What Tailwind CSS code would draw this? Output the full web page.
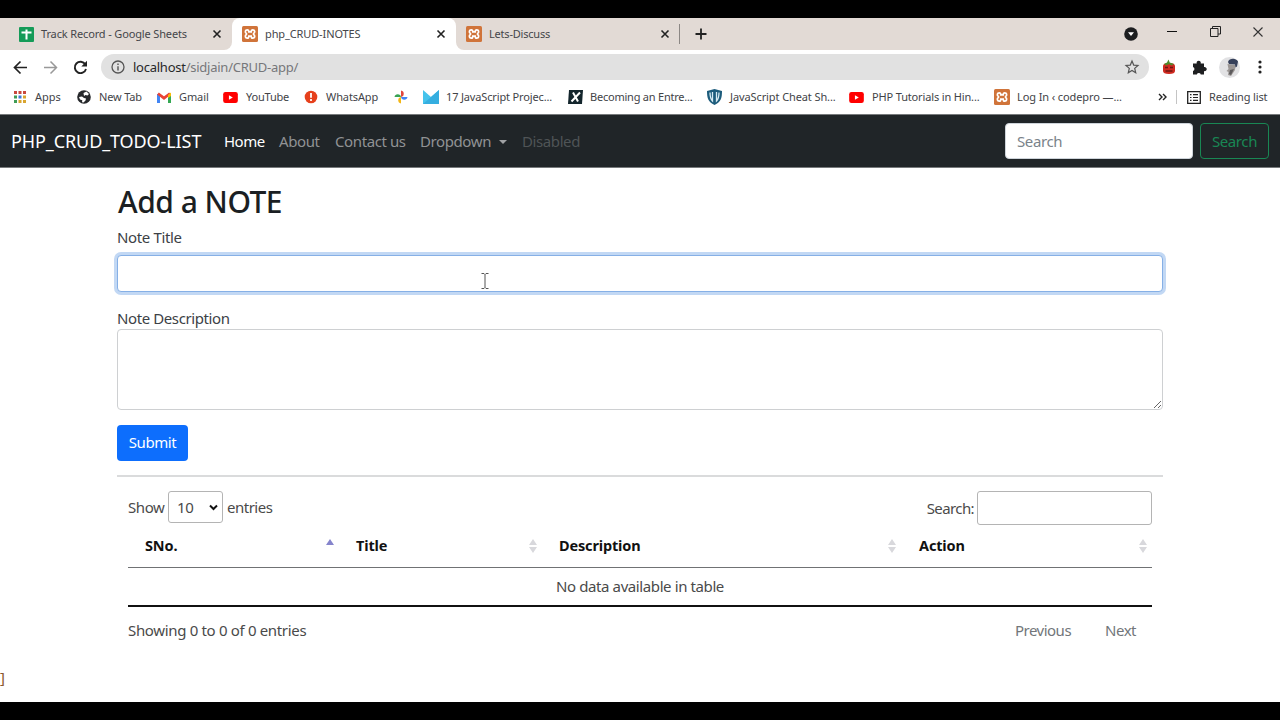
<!DOCTYPE html>
<html lang="en">

<head>
    <meta charset="UTF-8">
    <meta name="viewport" content="width=device-width, initial-scale=1.0">
    <title>php_CRUD-INOTES</title>
    <script src="https://cdn.jsdelivr.net/npm/@tailwindcss/browser@4"></script>
</head>

<body class="bg-black font-['Noto_Sans','Open_Sans',sans-serif] overflow-hidden">

    <!-- Shared icon shapes -->
    <svg class="hidden">
        <symbol id="xampp" viewBox="0 0 16 16">
            <rect width="16" height="16" rx="1.5" fill="#d0743a" />
            <path d="M5.2 3.8c-2 0-2.6 2.6-.8 3.6v1.2c-1.8 1-1.2 3.6.8 3.6 1.400 0 1.600-1.300 1.600-2h2.400c0 .7.2 2 1.600 2 2 0 2.600-2.600.8-3.600V7.400c1.800-1 1.200-3.600-.8-3.600-1.400 0-1.600 1.300-1.600 2H6.800c0-.7-.2-2-1.600-2z" fill="none" stroke="#fff" stroke-width="1.7" />
        </symbol>
        <symbol id="youtube" viewBox="0 0 16 12">
            <rect width="16" height="12" rx="2.5" fill="#f00" />
            <path d="M6.300 3.500v5L10.500 6z" fill="#fff" />
        </symbol>
        <symbol id="close" viewBox="0 0 10 10">
            <path d="M1.500 1.500l7 7M8.500 1.500l-7 7" stroke="#222" stroke-width="1.600" />
        </symbol>
        <symbol id="sort" viewBox="0 0 8 14">
            <path d="M4 0l4 6H0zM0 8h8l-4 6z" fill="#d8d8dc" />
        </symbol>
    </svg>

    <div class="h-[720px] w-[1280px] pt-[18px] pb-[18px]">
        <div class="h-full bg-white overflow-hidden">

            <!-- Tab strip -->
            <div class="flex h-8 bg-white text-[11px] text-[#45464a]">
                <div class="flex items-center w-[232px] bg-[#e2dad5] rounded-br-lg pl-[19px] pr-[10px]">
                    <svg class="size-[15px]" viewBox="0 0 15 15">
                        <rect width="15" height="15" rx="1" fill="#159b58" />
                        <path d="M2.500 5.500h10M7.500 2.500v10" stroke="#fff" stroke-width="2" />
                    </svg>
                    <span class="ml-[7px] whitespace-nowrap tracking-[-0.14px]">Track Record - Google Sheets</span>
                    <svg class="ml-auto size-[10px]"><use href="#close" /></svg>
                </div>
                <div class="bg-[#e2dad5] w-[224px]">
                    <div class="flex items-center h-full bg-white rounded-t-lg pl-[10px] pr-[10px]">
                        <svg class="size-4"><use href="#xampp" /></svg>
                        <span class="ml-[7px] whitespace-nowrap tracking-[-0.12px]">php_CRUD-INOTES</span>
                        <svg class="ml-auto size-[10px]"><use href="#close" /></svg>
                    </div>
                </div>
                <div class="flex items-center grow bg-[#e2dad5] rounded-bl-lg pl-[10px]">
                    <svg class="size-4"><use href="#xampp" /></svg>
                    <span class="ml-[7px] w-[171px] whitespace-nowrap tracking-[-0.2px]">Lets-Discuss</span>
                    <svg class="size-[10px]"><use href="#close" /></svg>
                    <div class="ml-[9px] h-5 w-px bg-[#8c8784]"></div>
                    <svg class="ml-[15px] size-3" viewBox="0 0 12 12"><path d="M6 .5v11M.5 6h11" stroke="#222" stroke-width="1.800" /></svg>
                    <svg class="ml-[417px] size-[14px]" viewBox="0 0 14 14">
                        <circle cx="7" cy="7" r="6.800" fill="#1d1e20" />
                        <path d="M4 5.200h6L7 9z" fill="#fff" />
                    </svg>
                    <svg class="ml-[29px] mb-1 w-[10px] h-[10px]" viewBox="0 0 10 10"><path d="M0 4.500h10" stroke="#111" /></svg>
                    <svg class="ml-[33px] mb-[5px] size-[11px]" viewBox="0 0 11 11"><path d="M.5 2.500h7.500v8H.5zM2.500 2.500V.5h8v7.500H8" fill="none" stroke="#222" /></svg>
                    <svg class="ml-[32px] mb-[5px] size-[10px]" viewBox="0 0 10 10"><path d="M.5.5l9 9M9.500.5l-9 9" stroke="#333" stroke-width="1.100" /></svg>
                </div>
            </div>

            <!-- Address bar -->
            <div class="flex items-center h-[34px] pl-[13px]">
                <svg class="size-[15px]" viewBox="0 0 15 15"><path d="M14 7.500H2M7.500 1.500l-6 6 6 6" fill="none" stroke="#222" stroke-width="1.700" /></svg>
                <svg class="ml-[15px] size-[15px]" viewBox="0 0 15 15"><path d="M1 7.500h12M7.500 1.500l6 6-6 6" fill="none" stroke="#999" stroke-width="1.500" /></svg>
                <svg class="ml-[15px] size-[15px]" viewBox="0 0 15 15">
                    <path d="M12.300 4.300A5.700 5.700 0 1 0 13 9" fill="none" stroke="#222" stroke-width="1.900" />
                    <path d="M14 .8v5.700H8.300z" fill="#222" />
                </svg>
                <div class="flex items-center ml-[13px] h-[26px] w-[1048px] rounded-full bg-[#e1e1e1] pl-[10px] pr-[9px]">
                    <svg class="size-[14px]" viewBox="0 0 14 14">
                        <circle cx="7" cy="7" r="6" fill="none" stroke="#555" stroke-width="1.300" />
                        <path d="M7 6.200v4.300M7 3.500v1.500" stroke="#555" stroke-width="1.400" />
                    </svg>
                    <span class="ml-2 pt-px text-[13px] text-[#76777a] tracking-[-0.25px]"><span class="text-[#27282a]">localhost</span>/sidjain/CRUD-app/</span>
                    <svg class="ml-auto size-4" viewBox="0 0 16 16"><path d="M8 2l1.700 4.100 4.300.4-3.300 2.900 1 4.300L8 11.400l-3.700 2.300 1-4.300L2 6.500l4.300-.4z" fill="none" stroke="#555" stroke-width="1.200" /></svg>
                </div>
                <svg class="ml-[13px] w-[14px] h-4" viewBox="0 0 14 16">
                    <path d="M1 7c0-2 2-3 6-3s6 1 6 3v5c0 2-2 3-6 3s-6-1-6-3z" fill="#cf2a20" />
                    <path d="M2 5l3-1.500L6.500.5l1.200 3L12 5 9.500 6.500 7 5 4.500 6.500z" fill="#4d8a2c" />
                    <path d="M3 8.500h3M8 8.500h3M3.500 12h7" stroke="#6e1712" stroke-width="1.300" />
                </svg>
                <svg class="ml-4 size-[15px]" viewBox="0 0 15 15"><path d="M1 3.500h3.700a2.100 2.100 0 1 1 4 0H12v3.600a2.100 2.100 0 1 1 0 4V14.500H8.800a2.100 2.100 0 0 0-4 0H1v-3.500a2.100 2.100 0 0 0 0-4z" fill="#1e1f21" /></svg>
                <svg class="ml-3 size-[21px]" viewBox="0 0 21 21">
                    <circle cx="10.500" cy="10.500" r="10.500" fill="#e2e2e4" />
                    <path d="M8.500 7l8 1-.5 5-4 6-3-1 .5-3-2-1 2-2z" fill="#9b9694" />
                    <path d="M9 5c1-4 8-4.500 10-.5l-1 5-1.500 1-.5-3-6-.5z" fill="#36405a" />
                    <path d="M11 13l4-1-3 6-2-1z" fill="#5c5a5c" />
                </svg>
                <svg class="ml-[18px] w-1 h-[14px]" viewBox="0 0 4 14">
                    <circle cx="2" cy="2" r="1.600" fill="#222" /><circle cx="2" cy="7" r="1.600" fill="#222" /><circle cx="2" cy="12" r="1.600" fill="#222" />
                </svg>
            </div>

            <!-- Bookmarks bar -->
            <div class="flex items-center h-[30px] pb-1 pl-[13px] text-[11px] text-[#424347] whitespace-nowrap">
                <div class="flex items-center gap-2 w-16">
                    <svg class="size-[14px] shrink-0" viewBox="0 0 14 14">
                        <path d="M1 1h3v3H1zM5.500 1h3v3h-3zM10 1h3v3h-3z" fill="#c9483d" />
                        <path d="M1 5.500h3v3H1z" fill="#3f9c56" /><path d="M5.500 5.500h3v3h-3z" fill="#3e79d6" /><path d="M10 5.500h3v3h-3z" fill="#d9a52f" />
                        <path d="M1 10h3v3H1z" fill="#3f9c56" /><path d="M5.500 10h3v3h-3zM10 10h3v3h-3z" fill="#d9a52f" />
                    </svg>
                    <span>Apps</span>
                </div>
                <div class="flex items-center gap-2 w-20">
                    <svg class="size-[14px] shrink-0" viewBox="0 0 14 14">
                        <circle cx="7" cy="7" r="6.800" fill="#26282b" />
                        <path d="M6.500 3l3-1.500 2.500 2.500-1.500 1.500-2-.5-1.500 1zM2 7l3-.5 2 1.500 2 .5-.5 2-2 2-1.500-.3.300-2L3 9.500z" fill="#fff" />
                    </svg>
                    <span class="tracking-[-0.15px]">New Tab</span>
                </div>
                <div class="flex items-center gap-2 w-[66px]">
                    <svg class="w-[14px] h-[11px] shrink-0" viewBox="0 0 14 11">
                        <path d="M1.500 11V2" stroke="#4285f4" stroke-width="3" /><path d="M12.500 11V2" stroke="#34a853" stroke-width="3" />
                        <path d="M1 1.500l6 4.700 6-4.700" fill="none" stroke="#ea4335" stroke-width="2.800" />
                        <path d="M11 3l3-2.500V4l-3 2z" fill="#fbbc04" />
                    </svg>
                    <span class="tracking-[-0.1px]">Gmail</span>
                </div>
                <div class="flex items-center gap-2 w-[81px]">
                    <svg class="w-[15px] h-[11px] shrink-0"><use href="#youtube" /></svg>
                    <span class="tracking-[-0.2px]">YouTube</span>
                </div>
                <div class="flex items-center gap-2 w-[90px]">
                    <svg class="size-[14px] shrink-0" viewBox="0 0 14 14">
                        <circle cx="7" cy="7" r="6.300" fill="#e6401c" />
                        <path d="M7 3v4.800M7 9v2" stroke="#fff" stroke-width="1.800" />
                    </svg>
                    <span class="tracking-[-0.1px]">WhatsApp</span>
                </div>
                <div class="w-[29px]">
                    <svg class="size-[14px]" viewBox="0 0 14 14">
                        <path d="M7 7H.5a3.300 3.300 0 0 1 6.500 0z" fill="#37a354" />
                        <path d="M7 7V.5a3.300 3.300 0 0 1 0 6.500z" fill="#e2453a" />
                        <path d="M7 7h6.500a3.300 3.300 0 0 1-6.500 0z" fill="#4285f4" />
                        <path d="M7 7v6.500a3.300 3.300 0 0 1 0-6.500z" fill="#f3b615" />
                    </svg>
                </div>
                <div class="flex items-center gap-[7px] w-[145px]">
                    <svg class="size-4 shrink-0" viewBox="0 0 16 16"><path d="M0 1l8 7 8-7v14H0z" fill="#45c3ec" /><path d="M0 15L16 1v14z" fill="#35aee0" /></svg>
                    <span class="tracking-[-0.15px]">17 JavaScript Projec...</span>
                </div>
                <div class="flex items-center gap-[7px] w-[139px]">
                    <svg class="w-[15px] h-[14px] shrink-0" viewBox="0 0 15 14"><path d="M1 0h14l-1 14H0z" fill="#13252c" /><path d="M5 2.500l5 9M12 2.500l-8.500 9" stroke="#fff" stroke-width="2" /></svg>
                    <span class="tracking-[-0.22px]">Becoming an Entre...</span>
                </div>
                <div class="flex items-center gap-2 w-[142px]">
                    <svg class="w-[15px] h-4 shrink-0" viewBox="0 0 15 16">
                        <path d="M7.500 0L15 2c0 7-1 11-7.500 14C1 13 0 9 0 2z" fill="#1d5c7c" />
                        <path d="M3 3.500c0 4 .5 6.500 2.500 8.500V3M9.500 3v9c2-2 2.500-4.500 2.500-8.500" fill="none" stroke="#d7ebf3" stroke-width="1.300" />
                    </svg>
                    <span class="tracking-[-0.1px]">JavaScript Cheat Sh...</span>
                </div>
                <div class="flex items-center gap-2 w-[145px]">
                    <svg class="w-[15px] h-[11px] shrink-0"><use href="#youtube" /></svg>
                    <span class="tracking-[-0.15px]">PHP Tutorials in Hin...</span>
                </div>
                <div class="flex items-center gap-[7px] w-[164px]">
                    <svg class="size-4 shrink-0"><use href="#xampp" /></svg>
                    <span class="tracking-[-0.1px]">Log In ‹ codepro —...</span>
                </div>
                <svg class="w-[9px] h-2" viewBox="0 0 9 8"><path d="M1 1l3 3-3 3M5 1l3 3-3 3" fill="none" stroke="#222" stroke-width="1.400" /></svg>
                <div class="ml-[9px] h-[14px] w-px bg-[#c4c4c4]"></div>
                <svg class="ml-[10px] w-[14px] h-[13px]" viewBox="0 0 14 13">
                    <path d="M.7.700h12.600v11.600H.7z" fill="none" stroke="#222" stroke-width="1.300" />
                    <path d="M3 3.700h1.500M3 6.500h1.500M3 9.300h1.500M6 3.700h5M6 6.500h5M6 9.300h5" stroke="#222" stroke-width="1.200" />
                </svg>
                <span class="ml-2 tracking-[-0.15px]">Reading list</span>
            </div>

            <!-- Navbar -->
            <nav class="flex items-center h-[54px] bg-[#202528] border-y border-[#777a7c] px-[11px] text-[15px] text-[#909294] whitespace-nowrap">
                <a class="pt-px w-[213px] text-[18px] text-white tracking-[-0.1px]">PHP_CRUD_TODO-LIST</a>
                <a class="pt-px w-[55px] text-white tracking-[-0.5px]">Home</a>
                <a class="pt-px w-14 tracking-[-0.4px]">About</a>
                <a class="pt-px w-[85px] tracking-[-0.4px]">Contact us</a>
                <a class="pt-px flex items-center w-[102px] tracking-[-0.4px]">Dropdown
                    <svg class="ml-2 w-2 h-1" viewBox="0 0 8 4"><path d="M0 0h8L4 4z" fill="#a0a2a4" /></svg>
                </a>
                <a class="pt-px text-[#4f5456] tracking-[-0.4px]">Disabled</a>
                <input type="text" placeholder="Search" class="ml-auto h-9 w-[188px] rounded bg-white border border-[#ced4da] px-[11px] tracking-[-0.4px] placeholder:text-[#7a838a]">
                <button class="ml-[7px] h-9 w-[69px] rounded border border-[#198754] text-[#198754] tracking-[-0.4px]">Search</button>
            </nav>

            <!-- Note form -->
            <div class="mx-auto w-[1046px] text-[15px] text-[#3c4146]">
                <h2 class="pt-[16px] pl-px h-[58px] text-[30px] leading-9 font-medium text-[#1b1f23] tracking-[-0.5px]">Add a NOTE</h2>
                <label class="block h-[29px] leading-[22px] tracking-[-0.35px]">Note Title</label>
                <input type="text" class="block h-[37px] w-full rounded border border-[#86b0e6] bg-white ring-3 ring-[#c2d8f4]">
                <label class="block mt-[15px] h-[22px] leading-[22px] tracking-[-0.4px]">Note Description</label>
                <textarea class="block h-[81px] w-full rounded border border-[#ced0d2] bg-white resize-y"></textarea>
                <button class="block mt-[15px] h-9 w-[71px] rounded bg-[#0d6efd] pb-px text-white tracking-[-0.4px]">Submit</button>
                <hr class="mt-[14px] border-t-2 border-[#dadbdc]">

                <!-- Notes table -->
                <div class="px-[11px] text-[#4a4a4a]">
                    <div class="flex justify-between mt-[14px] h-[34px]">
                        <label class="flex items-center h-8 tracking-[-0.4px]">
                            <span class="w-10">Show</span>
                            <span class="flex items-center justify-between h-8 w-[55px] rounded-[3px] border border-[#b4b4b4] pl-2 pr-1">10
                                <svg class="w-[9px] h-[7px]" viewBox="0 0 9 7"><path d="M1 1.500l3.500 3.500L8 1.500" fill="none" stroke="#111" stroke-width="2" /></svg>
                            </span>
                            <span class="ml-1 tracking-[-0.5px]">entries</span>
                        </label>
                        <label class="flex items-center tracking-[-0.6px]">Search:
                            <input type="text" class="ml-[3px] h-[34px] w-[175px] rounded-[3px] border border-[#b4b4b4] bg-white">
                        </label>
                    </div>
                    <table class="w-full table-fixed text-left">
                        <thead>
                            <tr class="h-[42px] border-b border-[#707274] text-[14.500px] text-[#111] tracking-[-0.15px]">
                                <th class="w-[211px] pl-[17px] pr-[5px] font-bold"><div class="flex items-center justify-between">SNo.<svg class="w-2 h-[14px]" viewBox="0 0 8 14"><path d="M4 0l4 6H0z" fill="#8584cc" /></svg></div></th>
                                <th class="w-[203px] pl-[17px] pr-[5px] font-bold"><div class="flex items-center justify-between">Title<svg class="w-2 h-[14px]"><use href="#sort" /></svg></div></th>
                                <th class="w-[359px] pl-[17px] pr-[5px] font-bold"><div class="flex items-center justify-between">Description<svg class="w-2 h-[14px]"><use href="#sort" /></svg></div></th>
                                <th class="pl-[18px] pr-[5px] font-bold"><div class="flex items-center justify-between">Action<svg class="w-2 h-[14px]"><use href="#sort" /></svg></div></th>
                            </tr>
                        </thead>
                        <tbody>
                            <tr class="h-[39px] border-b-2 border-[#111]">
                                <td colspan="4" class="text-center tracking-[-0.4px]">No data available in table</td>
                            </tr>
                        </tbody>
                    </table>
                    <div class="flex justify-between mt-[12px] leading-[22px]">
                        <span class="tracking-[-0.33px]">Showing 0 to 0 of 0 entries</span>
                        <div class="flex gap-[34px] pr-4 text-[#72767a] tracking-[-0.5px]">
                            <span>Previous</span>
                            <span>Next</span>
                        </div>
                    </div>
                </div>
            </div>
            <p class="mt-[25px] text-[15px] leading-[22px] text-[#8a5a30]">]</p>
        </div>
    </div>

    <!-- Text cursor over the title field -->
    <svg class="absolute left-[481px] top-[273px] w-2 h-4" viewBox="0 0 8 16"><path d="M.5.500h2.500l1 1 1-1h2.500M4 1.500v13M.5 15.500h2.500l1-1 1 1h2.500" fill="none" stroke="#555" /></svg>

</body>

</html>
